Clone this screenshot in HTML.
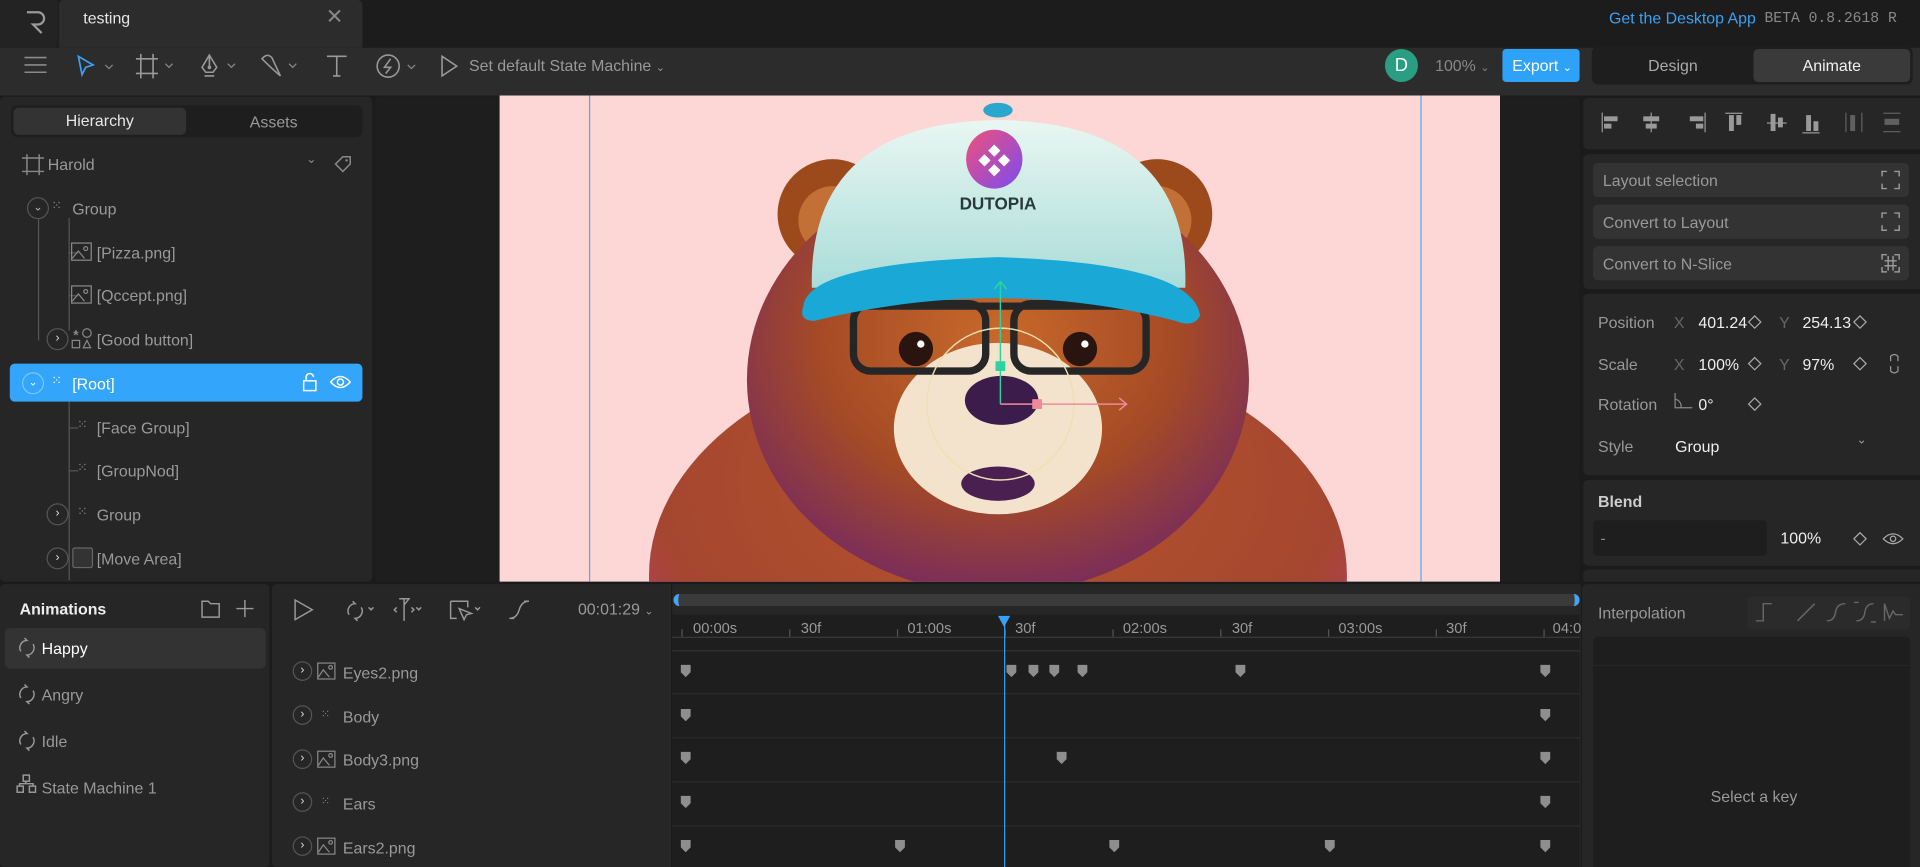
<!DOCTYPE html>
<html><head><meta charset="utf-8">
<style>
*{box-sizing:border-box;margin:0;padding:0}
html,body{width:1920px;height:867px;overflow:hidden;background:#1b1b1b}
body{font-family:"Liberation Sans",sans-serif;color:#9a9a9a}
#w{position:absolute;left:0;top:0;width:1568px;height:708px;transform:scale(1.22449);transform-origin:0 0;font-size:13px}
.a{position:absolute}
.t{position:absolute;white-space:nowrap;line-height:1}
svg{position:absolute;overflow:visible}
.row{position:absolute;height:1px;background:#2c2c2c}
</style></head><body><div id="w">
<!-- top bar -->
<div class="a" style="left:0;top:0;width:1568px;height:39px;background:#1c1c1c"></div>
<div class="a" style="left:0;top:0;width:47px;height:39px;background:#232323;border-radius:0 0 4px 0"></div>
<svg style="left:20px;top:8px" width="20" height="20" viewBox="0 0 20 20"><path d="M2 2H11A5 5 0 0 1 11 12H7L14 19" fill="none" stroke="#9a9a9a" stroke-width="1.8"/></svg>
<div class="a" style="left:48px;top:0;width:248px;height:39px;background:#2c2c2c;border-radius:4px 4px 0 0"></div>
<div class="t" style="left:68px;top:8px;color:#e6e6e6;font-size:13px">testing</div>
<div class="t" style="left:266px;top:5px;color:#888;font-size:17px">✕</div>
<div class="t" style="left:1314px;top:8px;color:#3aa0f5;font-size:13px">Get the Desktop App</div>
<div class="t" style="left:1441px;top:9px;color:#888;font-size:12px;font-family:'Liberation Mono',monospace">BETA 0.8.2618 R</div>
<!-- toolbar -->
<div class="a" style="left:0;top:39px;width:1568px;height:39px;background:#2c2c2c"></div>
<svg style="left:20px;top:46px" width="18" height="14"><path d="M0 1H18M0 7H18M0 13H18" stroke="#8a8a8a" stroke-width="1.3"/></svg>
<svg style="left:62px;top:45px" width="32" height="18"><path d="M2 1L14 8L8 10L5 16Z" fill="none" stroke="#3aa0f5" stroke-width="1.4"/><path d="M24 8l3 3 3-3" fill="none" stroke="#888"/></svg>
<svg style="left:111px;top:44px" width="34" height="20"><path d="M4 0V20M14 0V20M0 4H18M0 16H18" stroke="#999" stroke-width="1.3"/><path d="M24 8l3 3 3-3" fill="none" stroke="#888"/></svg>
<svg style="left:162px;top:44px" width="34" height="20"><path d="M9 1L15 11L12 15H6L3 11Z M9 1V10 M5 18H13" fill="none" stroke="#999" stroke-width="1.3"/><circle cx="9" cy="11" r="1.5" fill="#999"/><path d="M24 8l3 3 3-3" fill="none" stroke="#888"/></svg>
<svg style="left:212px;top:44px" width="34" height="20"><path d="M2 4Q6 -1 10 3L17 18Q10 12 2 4Z" fill="none" stroke="#999" stroke-width="1.3"/><path d="M24 8l3 3 3-3" fill="none" stroke="#888"/></svg>
<svg style="left:266px;top:45px" width="18" height="18"><path d="M1 1H17M9 1V17M6 17H12" stroke="#999" stroke-width="1.3"/></svg>
<svg style="left:307px;top:43px" width="36" height="22"><circle cx="10" cy="11" r="9" fill="none" stroke="#999" stroke-width="1.3"/><path d="M12 5L7 12H12L8 17" fill="none" stroke="#999" stroke-width="1.3"/><path d="M26 10l3 3 3-3" fill="none" stroke="#888"/></svg>
<svg style="left:360px;top:45px" width="14" height="18"><path d="M1 1L13 9L1 17Z" fill="none" stroke="#999" stroke-width="1.3"/></svg>
<div class="t" style="left:383px;top:47px;font-size:13px;color:#999">Set default State Machine <span style="font-size:9px">⌄</span></div>
<div class="a" style="left:1131px;top:40px;width:27px;height:27px;border-radius:50%;background:#2a9d83;color:#fff;font-size:15px;text-align:center;line-height:27px">D</div>
<div class="t" style="left:1172px;top:47px;color:#888">100% <span style="font-size:9px">⌄</span></div>
<div class="a" style="left:1227px;top:40px;width:63px;height:27px;border-radius:3px;background:#2ea1f8;color:#fff;font-size:13px;line-height:27px;padding-left:8px">Export <span style="font-size:9px">⌄</span></div>
<div class="a" style="left:1300px;top:38px;width:262px;height:31px;border-radius:5px;background:#1e1e1e"></div>
<div class="t" style="left:1346px;top:47px;color:#aaa">Design</div>
<div class="a" style="left:1432px;top:40px;width:128px;height:27px;border-radius:4px;background:#3a3a3a;color:#f0f0f0;text-align:center;line-height:27px">Animate</div>
<!-- left panel -->
<div class="a" style="left:0;top:79px;width:304px;height:396px;background:#262626;border-radius:4px"></div>
<div class="a" style="left:9px;top:86px;width:287px;height:26px;background:#1e1e1e;border-radius:5px"></div>
<div class="a" style="left:11px;top:88px;width:141px;height:22px;background:#333;border-radius:4px;color:#e6e6e6;text-align:center;line-height:22px">Hierarchy</div>
<div class="t" style="left:204px;top:93px;color:#999">Assets</div>
<svg style="left:18px;top:126px" width="18" height="17"><path d="M4 0V17M14 0V17M0 3H18M0 14H18" stroke="#888" stroke-width="1.2"/></svg>
<div class="t" style="left:39px;top:128px;color:#999">Harold</div>
<div class="t" style="left:250px;top:126px;color:#888;font-size:10px">⌄</div>
<svg style="left:273px;top:127px" width="14" height="14"><path d="M1 7L7 1H13V7L7 13Z" fill="none" stroke="#888" stroke-width="1.2"/><circle cx="10" cy="4" r="1" fill="#888"/></svg>
<!-- tree lines -->
<div class="a" style="left:31px;top:178px;width:1px;height:100px;background:#555"></div>
<div class="a" style="left:56px;top:178px;width:1px;height:92px;background:#555"></div>
<div class="a" style="left:56px;top:328px;width:1px;height:146px;background:#555"></div>
<div class="a" style="left:56px;top:206px;width:8px;height:1px;background:#555"></div>
<div class="a" style="left:56px;top:241px;width:8px;height:1px;background:#555"></div>
<div class="a" style="left:56px;top:349px;width:8px;height:1px;background:#555"></div>
<div class="a" style="left:56px;top:384px;width:8px;height:1px;background:#555"></div>
<div class="a" style="left:22px;top:161px;width:18px;height:18px;border-radius:50%;border:1px solid #555;color:#bbb;font-size:9px;text-align:center;line-height:14px">⌄</div>
<div class="t" style="left:42px;top:164px;color:#888;font-size:10px">⁙</div>
<div class="t" style="left:59px;top:164px;color:#999">Group</div>
<svg style="left:58px;top:198px" width="17" height="15"><rect x=".5" y=".5" width="16" height="14" fill="none" stroke="#888"/><path d="M1 13L6 7L11 13" fill="none" stroke="#888"/><circle cx="12" cy="5" r="1.6" fill="none" stroke="#888"/></svg>
<div class="t" style="left:79px;top:200px;color:#999">[Pizza.png]</div>
<svg style="left:58px;top:233px" width="17" height="15"><rect x=".5" y=".5" width="16" height="14" fill="none" stroke="#888"/><path d="M1 13L6 7L11 13" fill="none" stroke="#888"/><circle cx="12" cy="5" r="1.6" fill="none" stroke="#888"/></svg>
<div class="t" style="left:79px;top:235px;color:#999">[Qccept.png]</div>
<div class="a" style="left:38px;top:268px;width:18px;height:18px;border-radius:50%;border:1px solid #555;color:#ddd;font-size:10px;text-align:center;line-height:15px">›</div>
<svg style="left:58px;top:268px" width="18" height="18"><circle cx="13" cy="4" r="3.5" fill="none" stroke="#888"/><rect x="1" y="10" width="6" height="6" fill="none" stroke="#888"/><path d="M10 16L13 10L16 16Z" fill="none" stroke="#888"/><path d="M4 1l1 2h2l-2 1 1 2-2-1-2 1 1-2-2-1h2z" fill="#888"/></svg>
<div class="t" style="left:79px;top:271px;color:#999">[Good button]</div>
<div class="a" style="left:8px;top:297px;width:288px;height:31px;background:#33a5fb;border-radius:4px"></div>
<div class="a" style="left:18px;top:304px;width:18px;height:18px;border-radius:50%;border:1px solid #7cc6ff;color:#fff;font-size:9px;text-align:center;line-height:14px">⌄</div>
<div class="t" style="left:42px;top:307px;color:#fff;font-size:10px">⁙</div>
<div class="t" style="left:59px;top:307px;color:#fff">[Root]</div>
<svg style="left:247px;top:304px" width="12" height="16"><path d="M3 7V4A3 3 0 0 1 9 4" fill="none" stroke="#fff" stroke-width="1.2"/><rect x="1" y="7" width="10" height="8" fill="none" stroke="#fff" stroke-width="1.2"/></svg>
<svg style="left:269px;top:306px" width="18" height="12"><path d="M1 6Q9 -3 17 6Q9 15 1 6Z" fill="none" stroke="#fff" stroke-width="1.2"/><circle cx="9" cy="6" r="2.5" fill="none" stroke="#fff" stroke-width="1.2"/></svg>
<div class="t" style="left:63px;top:343px;color:#888;font-size:10px">⁙</div>
<div class="t" style="left:79px;top:343px;color:#999">[Face Group]</div>
<div class="t" style="left:63px;top:378px;color:#888;font-size:10px">⁙</div>
<div class="t" style="left:79px;top:378px;color:#999">[GroupNod]</div>
<div class="a" style="left:38px;top:411px;width:18px;height:18px;border-radius:50%;border:1px solid #555;color:#ddd;font-size:10px;text-align:center;line-height:15px;background:#262626">›</div>
<div class="t" style="left:63px;top:414px;color:#888;font-size:10px">⁙</div>
<div class="t" style="left:79px;top:414px;color:#999">Group</div>
<div class="a" style="left:38px;top:447px;width:18px;height:18px;border-radius:50%;border:1px solid #555;color:#ddd;font-size:10px;text-align:center;line-height:15px;background:#262626">›</div>
<div class="a" style="left:59px;top:447px;width:17px;height:17px;border:1px solid #666;background:#333;border-radius:2px"></div>
<div class="t" style="left:79px;top:450px;color:#999">[Move Area]</div>
<!-- canvas -->
<div class="a" style="left:306px;top:79px;width:984px;height:396px;background:#1e1e1e;border-radius:4px"></div>
<div class="a" style="left:408px;top:78px;width:817px;height:397px;background:#fdd6d6;overflow:hidden">
<svg style="left:-408px;top:-78px" width="1568" height="708" viewBox="0 0 1568 708">
<defs>
<radialGradient id="fur" cx="0.5" cy="0.4" r="0.6"><stop offset="0" stop-color="#c8692a"/><stop offset="0.6" stop-color="#a54a26"/><stop offset="1" stop-color="#7a2d5a"/></radialGradient>
<radialGradient id="body" cx="0.5" cy="0.3" r="0.7"><stop offset="0" stop-color="#b7552a"/><stop offset="0.7" stop-color="#a54630"/><stop offset="1" stop-color="#c2388a"/></radialGradient>
<linearGradient id="cap" x1="0" y1="0" x2="0" y2="1"><stop offset="0" stop-color="#e9f7f2"/><stop offset="1" stop-color="#a9dcd9"/></linearGradient>
<linearGradient id="logo" x1="0" y1="0" x2="1" y2="1"><stop offset="0" stop-color="#f0507a"/><stop offset="1" stop-color="#7a4cf0"/></linearGradient>
</defs>
<ellipse cx="815" cy="470" rx="285" ry="190" fill="url(#body)"/>
<circle cx="680" cy="175" r="45" fill="#9c4a1c"/><circle cx="680" cy="180" r="28" fill="#c27036"/>
<circle cx="945" cy="175" r="45" fill="#9c4a1c"/><circle cx="945" cy="180" r="28" fill="#c27036"/>
<ellipse cx="815" cy="310" rx="205" ry="175" fill="url(#fur)"/>
<ellipse cx="815" cy="350" rx="85" ry="70" fill="#f3e3cc"/>
<ellipse cx="815" cy="395" rx="30" ry="14" fill="#4a2050"/>
<ellipse cx="818" cy="327" rx="30" ry="20" fill="#3b1c4b"/>
<circle cx="748" cy="285" r="14" fill="#2a1410"/><circle cx="882" cy="285" r="14" fill="#2a1410"/>
<circle cx="752" cy="281" r="3" fill="#fff"/><circle cx="886" cy="281" r="3" fill="#fff"/>
<rect x="697" y="248" width="108" height="55" rx="14" fill="none" stroke="#262626" stroke-width="6"/>
<rect x="828" y="248" width="108" height="55" rx="14" fill="none" stroke="#262626" stroke-width="6"/>
<path d="M690 250H945" stroke="#262626" stroke-width="6"/>
<path d="M663 235Q660 100 815 98Q972 100 968 235Z" fill="url(#cap)"/>
<path d="M656 250Q660 215 815 210Q975 215 980 258Q975 268 960 262Q815 225 665 262Q652 262 656 250Z" fill="#1aa8d6"/>
<ellipse cx="815" cy="90" rx="12" ry="6" fill="#2aa7cc"/>
<ellipse cx="812" cy="130" rx="23" ry="24" fill="url(#logo)"/>
<path d="M812 118l5 5-5 5-5-5zM804 126l5 5-5 5-5-5zM820 126l5 5-5 5-5-5zM812 134l5 5-5 5-5-5z" fill="#fff"/>
<text x="815" y="171" text-anchor="middle" font-family="Liberation Sans" font-weight="bold" font-size="14" fill="#2a3a3a">DUTOPIA</text>
<ellipse cx="817" cy="330" rx="60" ry="62" fill="none" stroke="#ece1b4" stroke-width="1.2"/>
<path d="M817 330V230M812 236L817 230L822 236" fill="none" stroke="#2bd3a0" stroke-width="1.2"/>
<rect x="813" y="295" width="8" height="8" fill="#2bd3a0"/>
<path d="M817 330H920M914 325L920 330L914 335" fill="none" stroke="#ef8a9a" stroke-width="1.2"/>
<rect x="843" y="326" width="8" height="8" fill="#ef8a9a"/>
</svg>
</div>
<div class="a" style="left:481px;top:78px;width:1px;height:397px;background:#56a8f0"></div>
<div class="a" style="left:1160px;top:78px;width:1px;height:397px;background:#56a8f0"></div>
<!-- right panel -->
<div class="a" style="left:1293px;top:80px;width:275px;height:42px;background:#262626;border-radius:4px 0 0 4px"></div>
<svg style="left:1308px;top:91px" width="240" height="18"><g fill="#999"><rect x="0" y="1" width="1" height="16"/><rect x="2" y="4" width="11" height="4"/><rect x="2" y="10" width="6" height="4"/>
<rect x="40" y="1" width="1" height="16"/><rect x="34" y="4" width="13" height="4"/><rect x="36" y="10" width="9" height="4"/>
<rect x="84" y="1" width="1" height="16"/><rect x="72" y="4" width="11" height="4"/><rect x="77" y="10" width="6" height="4"/>
<rect x="101" y="1" width="14" height="1"/><rect x="104" y="3" width="4" height="13"/><rect x="110" y="3" width="4" height="8"/>
<rect x="135" y="9" width="16" height="1"/><rect x="138" y="2" width="4" height="14"/><rect x="144" y="5" width="4" height="8"/>
<rect x="164" y="17" width="14" height="1"/><rect x="167" y="3" width="4" height="13"/><rect x="173" y="8" width="4" height="8"/>
<rect x="199" y="1" width="1" height="16" opacity=".5"/><rect x="203" y="3" width="4" height="13" opacity=".5"/><rect x="212" y="1" width="1" height="16" opacity=".5"/>
<rect x="230" y="1" width="14" height="1" opacity=".5"/><rect x="231" y="6" width="12" height="5" opacity=".5"/><rect x="230" y="16" width="14" height="1" opacity=".5"/></g></svg>
<div class="a" style="left:1293px;top:126px;width:275px;height:110px;background:#262626;border-radius:4px 0 0 4px"></div>
<div class="a" style="left:1301px;top:133px;width:258px;height:28px;background:#333;border-radius:4px"></div>
<div class="a" style="left:1301px;top:167px;width:258px;height:28px;background:#333;border-radius:4px"></div>
<div class="a" style="left:1301px;top:201px;width:258px;height:28px;background:#333;border-radius:4px"></div>
<div class="t" style="left:1309px;top:141px;color:#999">Layout selection</div>
<div class="t" style="left:1309px;top:175px;color:#999">Convert to Layout</div>
<div class="t" style="left:1309px;top:209px;color:#999">Convert to N-Slice</div>
<svg style="left:1537px;top:140px" width="14" height="82"><g fill="none" stroke="#999" stroke-width="1.2"><path d="M0 4V0H4M10 0H14V4M14 10V14H10M4 14H0V10"/><path d="M0 38V34H4M10 34H14V38M14 44V48H10M4 48H0V44"/><path d="M0 72V68H4M10 68H14V72M14 78V82H10M4 82H0V78M5 69V81M9 69V81M2 73H12M2 77H12"/></g></svg>
<div class="a" style="left:1293px;top:240px;width:275px;height:148px;background:#262626;border-radius:4px 0 0 4px"></div>
<div class="t" style="left:1305px;top:257px;color:#999">Position</div>
<div class="t" style="left:1367px;top:257px;color:#666">X</div>
<div class="t" style="left:1387px;top:257px;color:#eee">401.24</div>
<div class="t" style="left:1453px;top:257px;color:#666">Y</div>
<div class="t" style="left:1472px;top:257px;color:#eee">254.13</div>
<div class="t" style="left:1305px;top:291px;color:#999">Scale</div>
<div class="t" style="left:1367px;top:291px;color:#666">X</div>
<div class="t" style="left:1387px;top:291px;color:#eee">100%</div>
<div class="t" style="left:1453px;top:291px;color:#666">Y</div>
<div class="t" style="left:1472px;top:291px;color:#eee">97%</div>
<svg style="left:1543px;top:289px" width="8" height="16"><path d="M1 6V2Q4 -1 7 2V6M1 10V14Q4 17 7 14V10" fill="none" stroke="#999"/></svg>
<div class="t" style="left:1305px;top:324px;color:#999">Rotation</div>
<svg style="left:1367px;top:321px" width="16" height="13"><path d="M1 0V12H15M1 5Q6 6 6 12" fill="none" stroke="#888"/></svg>
<div class="t" style="left:1387px;top:324px;color:#eee">0°</div>
<svg style="left:1428px;top:258px" width="100" height="80"><g fill="none" stroke="#aaa"><path d="M5 0L10 5L5 10L0 5Z"/><path d="M5 34L10 39L5 44L0 39Z"/><path d="M5 67L10 72L5 77L0 72Z"/><path d="M91 0L96 5L91 10L86 5Z"/><path d="M91 34L96 39L91 44L86 39Z"/></g></svg>
<div class="t" style="left:1305px;top:358px;color:#999">Style</div>
<div class="t" style="left:1368px;top:358px;color:#eee">Group</div>
<div class="t" style="left:1516px;top:355px;color:#999;font-size:10px">⌄</div>
<div class="a" style="left:1293px;top:392px;width:275px;height:70px;background:#262626;border-radius:4px 0 0 4px"></div>
<div class="t" style="left:1305px;top:403px;color:#ccc;font-weight:bold">Blend</div>
<div class="a" style="left:1301px;top:425px;width:142px;height:29px;background:#1e1e1e;border-radius:3px"></div>
<div class="t" style="left:1307px;top:433px;color:#888">-</div>
<div class="t" style="left:1454px;top:433px;color:#eee">100%</div>
<svg style="left:1514px;top:434px" width="40" height="12"><path d="M5 1L10 6L5 11L0 6Z" fill="none" stroke="#aaa"/><path d="M24 6Q32 -2 40 6Q32 14 24 6Z" fill="none" stroke="#aaa"/><circle cx="32" cy="6" r="2.2" fill="none" stroke="#aaa"/></svg>
<div class="a" style="left:1293px;top:465px;width:275px;height:10px;background:#262626;border-radius:4px 0 0 0"></div>
<!-- bottom: animations -->
<div class="a" style="left:0;top:477px;width:220px;height:231px;background:#262626;border-radius:4px"></div>
<div class="t" style="left:16px;top:491px;color:#eee;font-weight:bold">Animations</div>
<svg style="left:164px;top:489px" width="44" height="16"><path d="M1 2H6L8 4H15V15H1Z" fill="none" stroke="#999" stroke-width="1.2"/><path d="M36 1V15M29 8H43" stroke="#999" stroke-width="1.2"/></svg>
<div class="a" style="left:4px;top:513px;width:213px;height:33px;background:#333;border-radius:4px"></div>
<svg style="left:14px;top:521px" width="16" height="120"><g fill="none" stroke="#999" stroke-width="1.2"><path d="M3 11A6 6 0 0 1 8 2L6 0M13 5A6 6 0 0 1 8 14L10 16"/><path d="M3 49A6 6 0 0 1 8 40L6 38M13 43A6 6 0 0 1 8 52L10 54"/><path d="M3 87A6 6 0 0 1 8 78L6 76M13 81A6 6 0 0 1 8 90L10 92"/><rect x="5" y="112" width="5" height="5"/><rect x="0" y="121" width="5" height="5"/><rect x="10" y="121" width="5" height="5"/><path d="M7 117V119M2 121V119H13V121"/></g></svg>
<div class="t" style="left:34px;top:523px;color:#fff">Happy</div>
<div class="t" style="left:34px;top:561px;color:#999">Angry</div>
<div class="t" style="left:34px;top:599px;color:#999">Idle</div>
<div class="t" style="left:34px;top:637px;color:#999">State Machine 1</div>
<!-- timeline list -->
<div class="a" style="left:222px;top:477px;width:326px;height:231px;background:#262626;border-radius:4px 0 0 4px"></div>
<svg style="left:240px;top:488px" width="200" height="20"><g fill="none" stroke="#999" stroke-width="1.2"><path d="M1 2L15 10L1 18Z"/><path d="M45 14A6 6 0 0 1 50 5L48 3M55 8A6 6 0 0 1 50 17L52 19"/><path d="M61 8l2 2 2-2M100 8l2 2 2-2M148 8l2 2 2-2"/><path d="M90 1V19M86 1H94L90 6M84 8L82 10L84 12M96 8L98 10L96 12"/><path d="M128 3H142V8M128 3V17H133M135 9L139 18L141 14L145 13Z"/><path d="M176 17Q182 17 184 10Q186 3 192 3M176 17H180M188 3H192"/></g></svg>
<div class="t" style="left:472px;top:491px;color:#999">00:01:29 <span style="font-size:9px">⌄</span></div>
<div class="a" style="left:239px;top:540px;width:16px;height:16px;border-radius:50%;border:1px solid #555;color:#ddd;font-size:10px;text-align:center;line-height:13px">›</div>
<div class="a" style="left:239px;top:576px;width:16px;height:16px;border-radius:50%;border:1px solid #555;color:#ddd;font-size:10px;text-align:center;line-height:13px">›</div>
<div class="a" style="left:239px;top:612px;width:16px;height:16px;border-radius:50%;border:1px solid #555;color:#ddd;font-size:10px;text-align:center;line-height:13px">›</div>
<div class="a" style="left:239px;top:647px;width:16px;height:16px;border-radius:50%;border:1px solid #555;color:#ddd;font-size:10px;text-align:center;line-height:13px">›</div>
<div class="a" style="left:239px;top:683px;width:16px;height:16px;border-radius:50%;border:1px solid #555;color:#ddd;font-size:10px;text-align:center;line-height:13px">›</div>
<svg style="left:259px;top:541px" width="16" height="160"><g fill="none" stroke="#888"><rect x=".5" y=".5" width="14" height="13"/><path d="M1 12L5 6L10 12"/><circle cx="11" cy="4" r="1.5"/><rect x=".5" y="72.5" width="14" height="13"/><path d="M1 84L5 78L10 84"/><circle cx="11" cy="76" r="1.5"/><rect x=".5" y="143.5" width="14" height="13"/><path d="M1 155L5 149L10 155"/><circle cx="11" cy="147" r="1.5"/></g></svg>
<div class="t" style="left:262px;top:579px;color:#888;font-size:9px">⁙</div>
<div class="t" style="left:262px;top:650px;color:#888;font-size:9px">⁙</div>
<div class="t" style="left:280px;top:543px;color:#999">Eyes2.png</div>
<div class="t" style="left:280px;top:579px;color:#999">Body</div>
<div class="t" style="left:280px;top:614px;color:#999">Body3.png</div>
<div class="t" style="left:280px;top:650px;color:#999">Ears</div>
<div class="t" style="left:280px;top:686px;color:#999">Ears2.png</div>
<!-- timeline tracks -->
<div class="a" style="left:549px;top:477px;width:742px;height:231px;background:#262626"></div>
<div class="a" style="left:550px;top:485px;width:740px;height:10px;background:#3a3a3a;border-radius:5px;border-left:4px solid #4aa3f2;border-right:4px solid #4aa3f2"></div>
<div class="a" style="left:549px;top:502px;width:741px;height:206px;background:#1e1e1e"></div>
<div class="a" style="left:549px;top:520px;width:741px;height:1px;background:#3a3a3a"></div>
<div class="row" style="left:549px;top:531px;width:741px;background:#333"></div>
<div class="row" style="left:549px;top:566px;width:741px"></div>
<div class="row" style="left:549px;top:602px;width:741px"></div>
<div class="row" style="left:549px;top:638px;width:741px"></div>
<div class="row" style="left:549px;top:674px;width:741px"></div>
<svg style="left:549px;top:502px" width="741" height="20"><g stroke="#555"><path d="M8 12V18M96 12V18M184 12V18M272 12V18M360 12V18M448 12V18M536 12V18M624 12V18M712 12V18"/></g>
<g font-family="Liberation Sans" font-size="12" fill="#999"><text x="17" y="15">00:00s</text><text x="105" y="15">30f</text><text x="192" y="15">01:00s</text><text x="280" y="15">30f</text><text x="368" y="15">02:00s</text><text x="457" y="15">30f</text><text x="544" y="15">03:00s</text><text x="632" y="15">30f</text><text x="719" y="15">04:0</text></g></svg>
<svg style="left:549px;top:530px" width="741" height="178"><defs><path id="k" d="M-4 -5H4V1L0 5L-4 1Z" fill="#8e8e8e"/></defs>
<use href="#k" x="11" y="18"/><use href="#k" x="277" y="18"/><use href="#k" x="295" y="18"/><use href="#k" x="312" y="18"/><use href="#k" x="335" y="18"/><use href="#k" x="464" y="18"/><use href="#k" x="713" y="18"/>
<use href="#k" x="11" y="54"/><use href="#k" x="713" y="54"/>
<use href="#k" x="11" y="89"/><use href="#k" x="318" y="89"/><use href="#k" x="713" y="89"/>
<use href="#k" x="11" y="125"/><use href="#k" x="713" y="125"/>
<use href="#k" x="11" y="161"/><use href="#k" x="186" y="161"/><use href="#k" x="361" y="161"/><use href="#k" x="537" y="161"/><use href="#k" x="713" y="161"/></svg>
<div class="a" style="left:820px;top:508px;width:1px;height:200px;background:#3aa0f5"></div>
<svg style="left:815px;top:503px" width="11" height="9"><path d="M0 0H10L5 9Z" fill="#3aa0f5"/></svg>
<!-- interpolation -->
<div class="a" style="left:1292px;top:477px;width:276px;height:231px;background:#262626;border-radius:4px 0 0 0"></div>
<div class="t" style="left:1305px;top:494px;color:#999">Interpolation</div>
<div class="a" style="left:1427px;top:487px;width:133px;height:27px;background:#2b2b2b;border-radius:4px"></div>
<svg style="left:1434px;top:491px" width="120" height="18"><g fill="none" stroke="#666" stroke-width="1.2"><path d="M0 16H6V2H13"/><path d="M34 16L48 2"/><path d="M58 16Q64 16 65 9Q66 2 73 2"/><path d="M82 16Q88 16 89 9Q90 2 96 2M80 1H84M94 17H98"/><path d="M105 16V2L109 14L112 8L114 11H120"/></g></svg>
<div class="a" style="left:1301px;top:520px;width:259px;height:188px;background:#1e1e1e;border-radius:4px 4px 0 0"></div>
<div class="a" style="left:1301px;top:543px;width:259px;height:1px;background:#262626"></div>
<div class="t" style="left:1397px;top:644px;color:#999">Select a key</div>
</div></body></html>
